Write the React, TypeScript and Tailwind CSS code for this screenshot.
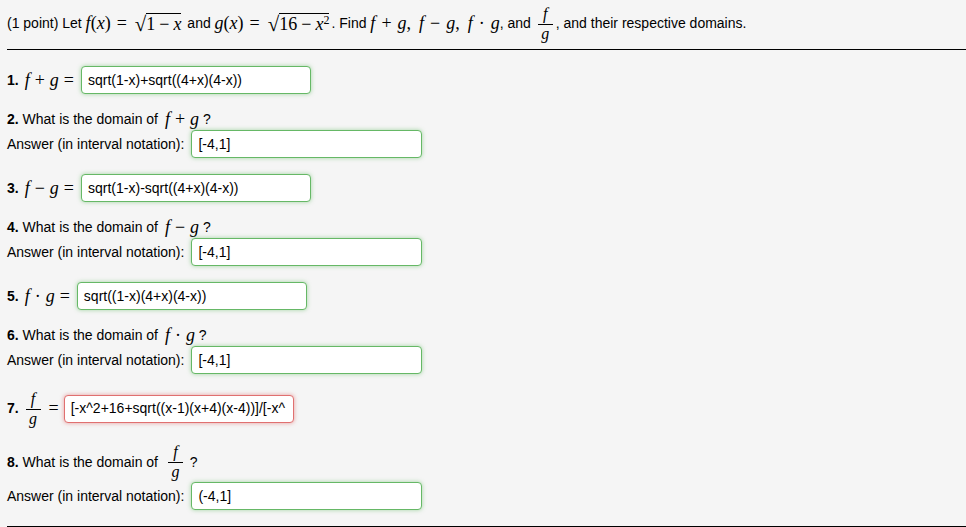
import React from "react";

const sans = "font-['Liberation_Sans','Helvetica',Arial,sans-serif]";
const serif = "font-['Liberation_Serif','Times_New_Roman',serif]";

function M({ children }: { children: React.ReactNode }) {
  return <span className={`${serif} text-[18px] italic`}>{children}</span>;
}

function Op({ children, wide }: { children: React.ReactNode; wide?: boolean }) {
  return (
    <span className={`${serif} text-[18px] not-italic ${wide ? "mx-[6px]" : "mx-[5px]"}`}>{children}</span>
  );
}

function Frac() {
  return (
    <span className={`${serif} inline-flex flex-col items-center align-middle text-[16px] italic leading-[16px] mx-[3px]`}>
      <span className="px-[2px] pb-[2px]">f</span>
      <span className="w-[15px] border-t border-black" />
      <span className="px-[2px] pt-[1px]">g</span>
    </span>
  );
}

function Sqrt({ children }: { children: React.ReactNode }) {
  return (
    <span className={`${serif} text-[18px] not-italic inline-flex items-end mx-[2px]`}>
      <span className="text-[21px] leading-[20px]">√</span>
      <span className="border-t border-black leading-[19px] pt-[1px]">{children}</span>
    </span>
  );
}

function Box({ value, bad, w = "w-[230px]" }: { value: string; bad?: boolean; w?: string }) {
  const tone = bad
    ? "border-[#e07070] shadow-[0_0_4px_rgba(220,80,80,0.55)]"
    : "border-[#66b866] shadow-[0_0_4px_rgba(92,184,92,0.55)]";
  return (
    <div
      className={`${w} h-[28px] bg-white border rounded-[4px] ${tone} flex items-center px-[6px] text-[14px] text-black overflow-hidden whitespace-nowrap`}
    >
      {value}
    </div>
  );
}

function Answer({ value }: { value: string }) {
  return (
    <div className="flex items-center gap-[7px] mt-[1px]">
      <span>Answer (in interval notation):</span>
      <Box value={value} w="w-[231px]" />
    </div>
  );
}

export default function App() {
  return (
    <div className={`min-h-screen w-[966px] bg-[#f5f5f5] text-[14px] text-black ${sans} pl-[7px]`}>
      {/* statement */}
      <div className="h-[44px] flex items-center pt-[3px] whitespace-nowrap">
        <span>(1 point) Let&nbsp;</span>
        <M>f</M>
        <span className={`${serif} text-[18px]`}>(</span>
        <M>x</M>
        <span className={`${serif} text-[18px]`}>)</span>
        <Op wide>=</Op>
        <Sqrt>
          1<span className="mx-[4px]">−</span>
          <i>x</i>
        </Sqrt>
        <span>&nbsp;and&nbsp;</span>
        <M>g</M>
        <span className={`${serif} text-[18px]`}>(</span>
        <M>x</M>
        <span className={`${serif} text-[18px]`}>)</span>
        <Op wide>=</Op>
        <Sqrt>
          16<span className="mx-[4px]">−</span>
          <i>x</i>
          <sup className="text-[12px]">2</sup>
        </Sqrt>
        <span>.&nbsp;Find&nbsp;</span>
        <M>f</M>
        <Op wide>+</Op>
        <M>g</M>
        <span className={`${serif} text-[18px] mr-[8px]`}>,</span>
        <M>f</M>
        <Op wide>−</Op>
        <M>g</M>
        <span className={`${serif} text-[18px] mr-[8px]`}>,</span>
        <M>f</M>
        <Op wide>·</Op>
        <M>g</M>
        <span>, and&nbsp;</span>
        <Frac />
        <span>, and their respective domains.</span>
      </div>
      <div className="mt-[5px] border-t border-black" />

      {/* 1 */}
      <div className="mt-[16px] flex items-center">
        <b>1.</b>
        <span className="w-[6px]" />
        <M>f</M>
        <Op>+</Op>
        <M>g</M>
        <Op>=</Op>
        <span className="w-[2px]" />
        <Box value="sqrt(1-x)+sqrt((4+x)(4-x))" />
      </div>
      <div className="mt-[15px] h-[20px] flex items-center">
        <b>2.</b>&nbsp;What is the domain of&nbsp;
        <span className="w-[3px]" />
        <M>f</M>
        <Op>+</Op>
        <M>g</M>
        &nbsp;?
      </div>
      <Answer value="[-4,1]" />

      {/* 3 */}
      <div className="mt-[16px] flex items-center">
        <b>3.</b>
        <span className="w-[6px]" />
        <M>f</M>
        <Op>−</Op>
        <M>g</M>
        <Op>=</Op>
        <span className="w-[2px]" />
        <Box value="sqrt(1-x)-sqrt((4+x)(4-x))" />
      </div>
      <div className="mt-[15px] h-[20px] flex items-center">
        <b>4.</b>&nbsp;What is the domain of&nbsp;
        <span className="w-[3px]" />
        <M>f</M>
        <Op>−</Op>
        <M>g</M>
        &nbsp;?
      </div>
      <Answer value="[-4,1]" />

      {/* 5 */}
      <div className="mt-[16px] flex items-center">
        <b>5.</b>
        <span className="w-[6px]" />
        <M>f</M>
        <Op>·</Op>
        <M>g</M>
        <Op>=</Op>
        <span className="w-[2px]" />
        <Box value="sqrt((1-x)(4+x)(4-x))" />
      </div>
      <div className="mt-[15px] h-[20px] flex items-center">
        <b>6.</b>&nbsp;What is the domain of&nbsp;
        <span className="w-[3px]" />
        <M>f</M>
        <Op>·</Op>
        <M>g</M>
        &nbsp;?
      </div>
      <Answer value="[-4,1]" />

      {/* 7 */}
      <div className="mt-[20px] h-[29px] flex items-center">
        <b>7.</b>&nbsp;
        <Frac />
        <Op>=</Op>
        <Box value="[-x^2+16+sqrt((x-1)(x+4)(x-4))]/[-x^" bad />
      </div>
      <div className="mt-[20px] h-[38px] flex items-center">
        <b>8.</b>&nbsp;What is the domain of&nbsp;
        <span className="w-[3px]" />
        <Frac />
        &nbsp;?
      </div>
      <Answer value="(-4,1]" />
      <div className="mt-[16px] border-t border-black" />
    </div>
  );
}
